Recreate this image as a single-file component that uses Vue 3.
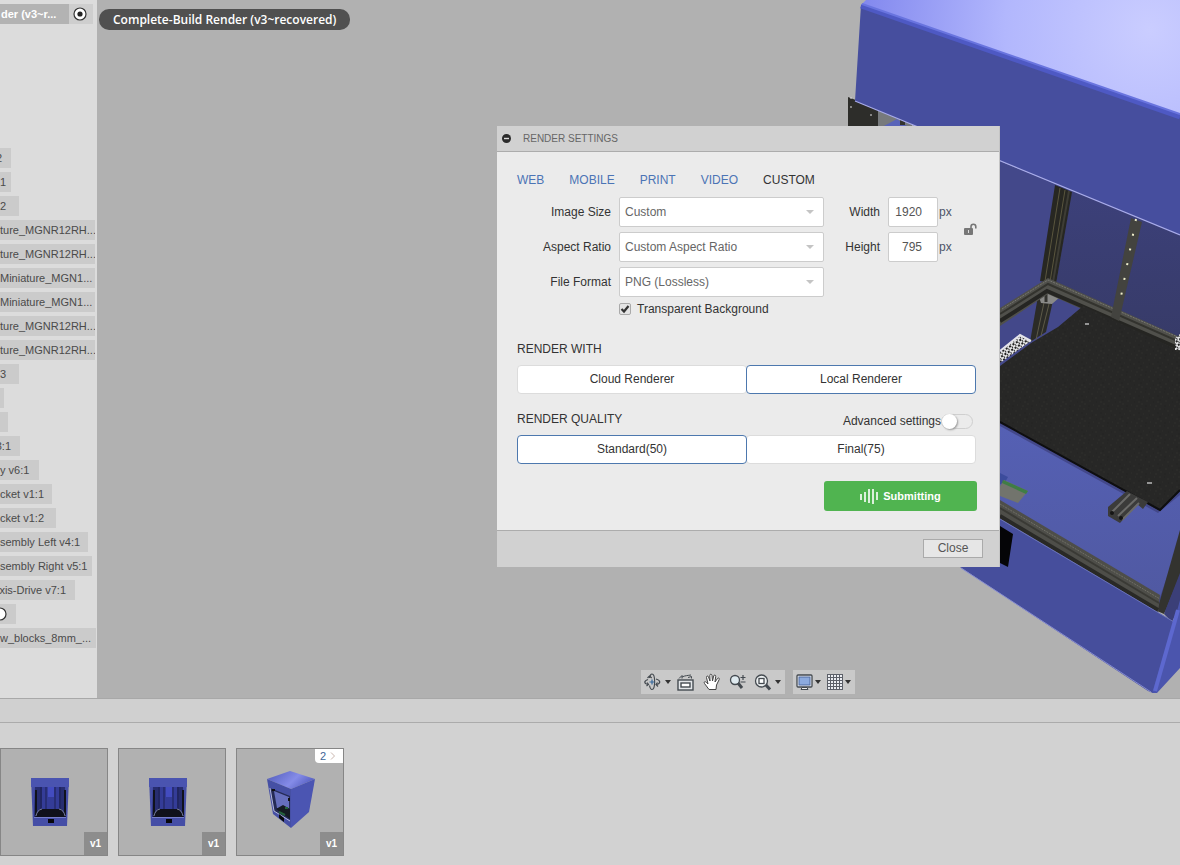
<script setup>
import { ref } from 'vue'

const browserRows = [
  { text: '2', width: 11, clipped: true },
  { text: '1', width: 11 },
  { text: '2', width: 19 },
  { text: 'ture_MGNR12RH...', width: 95 },
  { text: 'ture_MGNR12RH...', width: 95 },
  { text: 'Miniature_MGN1...', width: 95 },
  { text: 'Miniature_MGN1...', width: 95 },
  { text: 'ture_MGNR12RH...', width: 95 },
  { text: 'ture_MGNR12RH...', width: 95 },
  { text: '3', width: 19 },
  { text: '', width: 4 },
  { text: '', width: 8 },
  { text: '3:1', width: 20, clipped: true },
  { text: 'y v6:1', width: 39 },
  { text: 'cket v1:1', width: 52 },
  { text: 'cket v1:2', width: 56 },
  { text: 'sembly Left v4:1', width: 88 },
  { text: 'sembly Right v5:1', width: 92 },
  { text: 'xis-Drive v7:1', width: 75, clipped: true },
  { text: '', radio: true, width: 16, clipped: true },
  { text: 'w_blocks_8mm_...', width: 96 },
]

const tabs = ['WEB', 'MOBILE', 'PRINT', 'VIDEO', 'CUSTOM']
const activeTab = ref('CUSTOM')
const imageSize = ref('Custom')
const aspect = ref('Custom Aspect Ratio')
const format = ref('PNG (Lossless)')
const width = ref('1920')
const height = ref('795')
const transparent = ref(true)
const advanced = ref(false)
const renderer = ref('Local Renderer')
const quality = ref('Standard(50)')
const renders = [{ iso: false }, { iso: false }, { iso: true, count: 2 }]
</script>

<template>
  <div class="app">
    <div class="workspace">
      <aside class="browser">
        <div class="root-row">
          <span class="root-name">der (v3~r...</span>
          <button class="root-radio" aria-label="Activate component">
            <svg width="14" height="14" viewBox="0 0 14 14">
              <circle cx="7" cy="7" r="6" fill="#fff" stroke="#333" stroke-width="1.2" />
              <circle cx="7" cy="7" r="2.6" fill="#222" />
            </svg>
          </button>
        </div>
        <ul class="rows">
          <li v-for="(row, i) in browserRows" :key="i" class="row" :class="{ clipped: row.clipped }" :style="{ width: row.width + 'px' }">
            <svg v-if="row.radio" class="row-radio" width="14" height="14" viewBox="0 0 14 14">
              <circle cx="7" cy="7" r="6" fill="#fff" stroke="#333" stroke-width="1.2" />
            </svg>
            <span v-else>{{ row.text }}</span>
          </li>
        </ul>
      </aside>

      <main class="canvas">
        <svg class="scene" width="340" height="698" viewBox="840 0 340 698" aria-hidden="true">
          <defs>
            <radialGradient id="top" gradientUnits="userSpaceOnUse" cx="1150" cy="30" r="290">
              <stop offset="0" stop-color="#cacdff" />
              <stop offset="0.5" stop-color="#b2b7fd" />
              <stop offset="1" stop-color="#8288ee" />
            </radialGradient>
            <linearGradient id="wall" x1="0" y1="0" x2="0" y2="1">
              <stop offset="0" stop-color="#3c407a" />
              <stop offset="1" stop-color="#373b68" />
            </linearGradient>
            <linearGradient id="floor" x1="0" y1="0" x2="0" y2="1">
              <stop offset="0" stop-color="#5560b4" />
              <stop offset="1" stop-color="#5059a2" />
            </linearGradient>
            <pattern id="mesh" width="4" height="4" patternUnits="userSpaceOnUse" patternTransform="rotate(-32)">
              <rect width="4" height="4" fill="#e4e4e6" />
              <rect width="2" height="2" fill="#222" />
              <rect x="2" y="2" width="1" height="2" fill="#333" />
            </pattern>
            <pattern id="grain" width="19" height="17" patternUnits="userSpaceOnUse">
              <rect width="19" height="17" fill="#272726" />
              <path d="M0 1h2M8 3h2M14 1h1M3 6h1M12 7h2M6 10h2M17 11h2M1 13h2M10 14h1M15 15h2" stroke="#2e2e2c" />
              <path d="M5 1h1M17 5h2M0 9h2M9 7h1M13 11h1M5 15h2" stroke="#222221" />
            </pattern>
          </defs>
          <path d="M866 0 861 5 1180 117V0Z" fill="url(#top)" />
          <path d="M848 97 912 122V127H848Z" fill="#2d2d2a" />
          <path d="M878 110 912 124V127H878Z" fill="#777a7c" />
          <path d="M882 127 897 119 908 127Z" fill="#5964b9" />
          <path d="M900 120h5v5h-5Z" fill="#33332e" />
          <path d="M850 98h2M850 107h2M870 115h2M867 105h2" stroke="#ddd" />
          <path d="M1000 161 1180 235V600L1164 612 1000 518Z" fill="#43488a" />
          <path d="M1072 190 1180 234V340L1056 284Z" fill="url(#wall)" />
          <path d="M861 5 1180 117V235L855 101Z" fill="#464e9e" />
          <path d="M861 6 1180 117" stroke="#4e59c4" stroke-width="5" />
          <path d="M862 4 1180 114" stroke="#6974df" stroke-width="2" />
          <path d="M855 101 1180 235" stroke="#a9acea" stroke-width="1.2" />
          <path d="M1055 185 1072 192 1056 284 1040 281Z" fill="#272722" />
          <path d="M1060 188 1045 281M1065 190 1050 282" stroke="#5a563e" />
          <path d="M1069 191 1053 282" stroke="#3e3d35" stroke-width="2" />
          <path d="M1038 296 1054 296 1046 332 1030 342Z" fill="#2b2b27" />
          <path d="M1045 298 1036 340M1050 300 1041 336" stroke="#5d5a48" />
          <path d="M1038 294 1048 288 1060 297 1052 304 1041 303Z" fill="#898987" />
          <path d="M1046 290v12" stroke="#33332f" stroke-width="3" />
          <path d="M1000 308 1048 278 1180 337V353L1048 294 1000 326Z" fill="#50504b" />
          <path d="M1000 321 1047 291 1180 349" fill="none" stroke="#252522" stroke-width="4" />
          <path d="M1000 314 1048 284 1180 342" fill="none" stroke="#33332e" stroke-width="2" />
          <path d="M1002 309 1048 280 1180 338" fill="none" stroke="#777770" stroke-dasharray="2 1" />
          <path d="M1131 218 1142 222 1123 304 1119 321 1111 317Z" fill="#43433f" />
          <path d="M1136 219 1119 307" stroke="#eeeecb" stroke-width="2" stroke-dasharray="2 13" />
          <path d="M1000 352 1020 335 1031 341 1000 363Z" fill="url(#mesh)" />
          <path d="M1000 351 1020 335 1031 341" fill="none" stroke="#e4e4ea" stroke-width="2" />
          <path d="M1000 426 1158 513 1180 495V540L1160 597 1000 502Z" fill="url(#floor)" />
          <path d="M1083 306 1180 351V491L1160 511 1000 422V366L1031 343 1058 327Z" fill="url(#grain)" />
          <path d="M1000 422 1160 510 1180 490" fill="none" stroke="#0e0e10" stroke-width="2" />
          <path d="M1085 324h4M1147 483h5" stroke="#bbb" stroke-width="1.5" />
          <path d="M1175 338 1180 334V350H1175Z" fill="url(#mesh)" />
          <path d="M1000 473 1008 477 1004 484 1000 484Z" fill="#3c4c9c" />
          <path d="M1004 480 1028 491 1018 503 1000 496V486Z" fill="#72746d" />
          <path d="M1003 480 1028 491 1026 494 1002 483Z" fill="#3f7d45" />
          <path d="M1108 507 1127 491 1148 502 1143 509 1137 504 1120 523 1108 516Z" fill="#3b3b3a" />
          <path d="M1112 512 1130 494M1118 516 1137 498M1122 520 1139 503" stroke="#6b6b69" stroke-width="2" />
          <circle cx="1112" cy="513" r="2" fill="#151515" />
          <circle cx="1121" cy="518" r="2" fill="#151515" />
          <path d="M1180 530V575L1164 614 1157 611Z" fill="#33332f" />
          <path d="M1180 573V606L1172 622 1164 614Z" fill="#3b3f78" />
          <path d="M1000 500 1160 595 1158 613 1000 519Z" fill="#4e4e49" />
          <path d="M1000 504 1160 599" stroke="#6f6f66" stroke-dasharray="2 1" />
          <path d="M1000 508 1159 603" stroke="#3a3a35" stroke-width="2" />
          <path d="M1000 516 1158 610" stroke="#292926" stroke-width="4" />
          <path d="M960 567 1000 519 1174 622 1153 693 1148 691Z" fill="#464e9c" />
          <path d="M1000 519 1174 622" stroke="#6770ba" />
          <path d="M1174 622 1180 600V668L1157 693H1152Z" fill="#4b55ad" />
          <path d="M1178 610 1155 691" stroke="#5d68cf" stroke-width="4" />
          <path d="M961 568 1151 692" stroke="#858bd0" />
          <path d="M1000 526 1013 534 1008 567 1000 563Z" fill="#050507" />
        </svg>

        <div class="doc-title">Complete-Build Render (v3~recovered)</div>

        <section class="dialog" role="dialog" aria-labelledby="dlg-title">
          <header class="dialog-head">
            <button class="collapse" aria-label="Collapse">
              <svg width="9" height="9" viewBox="0 0 9 9">
                <circle cx="4.5" cy="4.5" r="4.5" fill="#2b2b2b" />
                <path d="M2 4.5h5" stroke="#ddd" stroke-width="1.4" />
              </svg>
            </button>
            <h1 id="dlg-title">RENDER SETTINGS</h1>
          </header>

          <div class="dialog-body">
            <nav class="tabs">
              <button v-for="t in tabs" :key="t" class="tab" :class="{ active: t === activeTab }" @click="activeTab = t">{{ t }}</button>
            </nav>

            <div class="form">
              <div class="fields">
                <label for="size">Image Size</label>
                <div class="select"><select id="size" v-model="imageSize"><option>Custom</option></select></div>
                <label for="aspect">Aspect Ratio</label>
                <div class="select"><select id="aspect" v-model="aspect"><option>Custom Aspect Ratio</option></select></div>
                <label for="format">File Format</label>
                <div class="select"><select id="format" v-model="format"><option>PNG (Lossless)</option></select></div>
              </div>
              <div class="dims">
                <label for="w">Width</label>
                <input id="w" v-model="width" type="text" /><span class="unit">px</span>
                <label for="h">Height</label>
                <input id="h" v-model="height" type="text" /><span class="unit">px</span>
              </div>
              <button class="lock" aria-label="Lock aspect ratio">
                <svg width="13" height="13" viewBox="0 0 13 13">
                  <rect x="0" y="5" width="9" height="7" rx="1" fill="#777" />
                  <path d="M7 6V3.6a2.4 2.4 0 0 1 4.8 0V5.5" fill="none" stroke="#777" stroke-width="1.6" />
                  <rect x="4" y="7" width="1" height="3" fill="#ddd" />
                </svg>
              </button>
            </div>

            <div class="check-row">
              <input id="transparent" v-model="transparent" type="checkbox" />
              <svg v-if="transparent" class="tick" width="12" height="12" viewBox="0 0 12 12"><path d="M2.500 6 5 8.500 9.500 3" fill="none" stroke="#333" stroke-width="2.2" /></svg>
              <label for="transparent">Transparent Background</label>
            </div>

            <h2 class="with-title">RENDER WITH</h2>
            <div class="segments">
              <button v-for="o in ['Cloud Renderer', 'Local Renderer']" :key="o" :class="{ on: o === renderer }" @click="renderer = o">{{ o }}</button>
            </div>

            <div class="quality-head">
              <h2>RENDER QUALITY</h2>
              <label class="advanced">Advanced settings<input v-model="advanced" type="checkbox" role="switch" /></label>
            </div>
            <div class="segments">
              <button v-for="o in ['Standard(50)', 'Final(75)']" :key="o" :class="{ on: o === quality }" @click="quality = o">{{ o }}</button>
            </div>

            <button class="submit">
              <svg width="18" height="16" viewBox="0 0 18 16">
                <path d="M1 6v6M5 4v10M9 1v14M13 1v15M17 4v8" stroke="#fff" stroke-width="1.6" />
              </svg>
              Submitting
            </button>
          </div>

          <footer class="dialog-foot"><button class="close">Close</button></footer>
        </section>

        <div class="navbar">
          <div class="nav-group">
            <button class="menu" aria-label="Orbit">
              <svg width="18" height="18" viewBox="0 0 18 18" fill="none" stroke="#444a50" stroke-width="1.2">
                <path d="M5.500 5C6 2.500 7 1 8 1c3.500 0 3.500 15.500 0 15.500-1 0-2-1.500-2.500-4" />
                <path d="M4 6.500C-.5 8 0 10.500 4 11.500M12 6c5 1.500 5 4.500 0 5.500" />
                <path d="M3.500 5 5.500 3l2.200 2M2.500 13 4.500 11.500 3 9.500M13.500 9.500 12 11.500l2 2" />
                <path d="M8 6.500v5M5.500 9h5" stroke="#35679c" />
              </svg><i class="caret"></i>
            </button>
            <button class="tool" aria-label="Look at">
              <svg width="18" height="18" viewBox="0 0 18 18" fill="none" stroke="#444a50" stroke-width="1.4">
                <rect x="1" y="7" width="15" height="10" fill="#e3e6e9" />
                <rect x="4" y="10" width="9" height="4" fill="#fff" />
                <path d="M2 5.500 5 2.500v3M5 4c3-1.500 6-1.500 9-2M11 4.500l3.500-1v2" stroke-width="1" />
              </svg>
            </button>
            <button class="tool" aria-label="Pan">
              <svg width="18" height="18" viewBox="0 0 18 18">
                <path d="M6 16.500 1.500 10.500C.5 9 2 8 3.300 9.300L5 11 3.500 4.500C3.200 2.800 5 2.500 5.500 4L7 8 6.800 2.500c0-1.700 2-1.700 2.200 0L9.500 8l1.200-5c.4-1.500 2.200-1.200 2 .4L12 9l2.500-3.500c.8-1.200 2.200-.3 1.700 1L13.500 12 13 16.500Z" fill="#fff" stroke="#444" />
              </svg>
            </button>
            <button class="tool" aria-label="Zoom">
              <svg width="18" height="18" viewBox="0 0 18 18" fill="none" stroke="#444a50">
                <circle cx="6" cy="7" r="4.500" fill="#dfeaef" stroke-width="1.3" />
                <path d="m9 10 4 5" stroke-width="3" />
                <path d="M14 2v5M11.500 4.500h5M11.500 9h5" stroke-width="1.2" />
              </svg>
            </button>
            <button class="menu" aria-label="Fit">
              <svg width="18" height="18" viewBox="0 0 18 18" fill="none" stroke="#444a50">
                <circle cx="7.500" cy="8" r="6" fill="#edf0f1" stroke-width="1.3" />
                <rect x="5" y="5.500" width="5" height="5" fill="#fff" stroke-width="1.3" />
                <path d="m12 12 4 4.500" stroke-width="3" />
              </svg><i class="caret"></i>
            </button>
          </div>
          <div class="nav-group">
            <button class="menu tight" aria-label="Display settings">
              <svg width="18" height="18" viewBox="0 0 18 18" stroke="#444a50">
                <rect x="1" y="2" width="15" height="12" rx="1" fill="#eef1f6" stroke-width="1.3" />
                <rect x="3" y="4" width="11" height="8" fill="#8caade" stroke="#4f6ba0" />
                <path d="M6 14.500h5l1 2H5Z" fill="#eee" />
              </svg><i class="caret"></i>
            </button>
            <button class="menu tight" aria-label="Grid and snaps">
              <svg width="18" height="18" viewBox="0 0 18 18">
                <rect x="1" y="2" width="16" height="15" fill="#eceef3" />
                <path d="M1.500 1v16M4.500 1v16M7.500 1v16M10.500 1v16M13.500 1v16M16.500 1v16M1 1.500h16M1 4.500h16M1 7.500h16M1 10.500h16M1 13.500h16M1 16.500h16" stroke="#5c6069" />
              </svg><i class="caret"></i>
            </button>
          </div>
        </div>
      </main>
    </div>

    <section class="gallery">
      <div class="gallery-bar"></div>
      <div class="thumbs">
        <button v-for="(r, i) in renders" :key="i" class="thumb">
          <svg v-if="!r.iso" width="106" height="106" viewBox="1 1 106 106">
            <path d="M31 30h38l-2 48H33Z" fill="#454ea6" />
            <path d="M31 30h38v9H31Z" fill="#4a54b0" />
            <path d="M35 39h30l1 30H34Z" fill="#272d70" />
            <path d="M42 39h17v23H42Z" fill="#343c98" />
            <path d="M48 39h6v10h-6Z" fill="#434cc0" />
            <path d="M46 39v24M55 39v24M60 39v24M41 39v22" stroke="#1c2154" />
            <path d="M36 42v25M65 42v25" stroke="#10121c" stroke-width="2" />
            <path d="M40 61h21l5 8H35Z" fill="#10111b" />
            <path d="M36 68q1-6 6-7M65 68q-1-6-6-7" fill="none" stroke="#777d99" />
            <path d="M34 69.500h32" stroke="#767eca" />
            <path d="M48 71h6v4h-6Z" fill="#08080c" />
          </svg>
          <svg v-else width="106" height="106" viewBox="1 1 106 106">
            <defs>
              <linearGradient id="lid" x1="0" y1="0" x2="1" y2="0.4">
                <stop offset="0" stop-color="#4e58b8" />
                <stop offset="0.65" stop-color="#858ce8" />
                <stop offset="1" stop-color="#5962c4" />
              </linearGradient>
            </defs>
            <path d="M31 31 54 23 79 31 55 41Z" fill="url(#lid)" />
            <path d="M31 31 55 41V80L37 66Z" fill="#4650a4" />
            <path d="M55 41 79 31 73 64 55 80Z" fill="#4b55b2" />
            <path d="M34 40 54 48V72L38 63Z" fill="#252b55" />
            <path d="M38 43 53 49V62L41 60Z" fill="#666fbd" />
            <path d="M40 61 47 57 54 61V71Z" fill="#151b22" />
            <path d="M34 40 38 63 54 73" fill="none" stroke="#b5b9dc" />
            <path d="M43 64 49 67M49 60h3" stroke="#24613a" stroke-width="2" />
            <path d="M43 66 48 70v4l-5-4Z" fill="#08080c" />
            <path d="M36 42h3M53 50v3" stroke="#111" stroke-width="2" />
          </svg>
          <span v-if="r.count" class="count">{{ r.count }}<svg width="6" height="8" viewBox="0 0 6 8"><path d="M1 0.500 4.500 4 1 7.500" fill="none" stroke="#c9b5ad" /></svg></span>
          <span class="version">v1</span>
        </button>
      </div>
    </section>
  </div>
</template>

<style>
body {
  margin: 0;
  background: #d2d2d2;
}
</style>

<style scoped>
.app {
  display: flex;
  flex-direction: column;
  min-height: 100vh;
  font-family: "Liberation Sans", Arial, sans-serif;
  font-size: 12px;
  color: #333;
}
.app *,
.app *::before,
.app *::after {
  box-sizing: border-box;
}
button,
input,
select {
  font: inherit;
  color: inherit;
}
button {
  padding: 0;
  border: 0;
  background: none;
  cursor: pointer;
}
svg {
  display: block;
}
h1,
h2 {
  margin: 0;
  font-weight: normal;
}
.workspace {
  display: flex;
  flex: 1;
  background: #b1b1b1;
}
.browser {
  width: 97px;
  flex: none;
  padding-top: 4px;
  background: #dcdcdc;
  overflow: hidden;
}
.root-row {
  display: flex;
  width: 93px;
  height: 20px;
  background: #cecece;
}
.root-name {
  width: 69px;
  padding-left: 1px;
  overflow: hidden;
  background: #b3b3b3;
  color: #fff;
  font-size: 11px;
  font-weight: bold;
  line-height: 20px;
  white-space: nowrap;
}
.root-radio {
  padding-left: 4px;
}
.rows {
  display: flex;
  flex-direction: column;
  gap: 4px;
  margin: 124px 0 0;
  padding: 0;
  list-style: none;
}
.row {
  display: flex;
  align-items: center;
  height: 20px;
  overflow: hidden;
  background: #cbcbcb;
  color: #4a4a4a;
  font-size: 11px;
  line-height: 20px;
  white-space: nowrap;
}
.row.clipped {
  justify-content: flex-end;
  padding-right: 9px;
}
.row-radio {
  flex: none;
}
.canvas {
  position: relative;
  flex: 1;
  min-width: 0;
  overflow: hidden;
}
.scene {
  position: absolute;
  top: 0;
  right: 0;
}
.doc-title {
  position: absolute;
  top: 9px;
  left: 2px;
  padding: 0 14px;
  border-radius: 10px;
  background: #505050;
  color: #fff;
  font-family: "Open Sans", "Noto Sans", sans-serif;
  font-size: 12px;
  font-weight: 600;
  line-height: 21px;
  white-space: nowrap;
}
.dialog {
  position: absolute;
  top: 126px;
  right: 180px;
  width: 503px;
  background: #ebebeb;
  border-right: 1px solid #c4c4c4;
}
.dialog-head {
  display: flex;
  align-items: center;
  gap: 12px;
  height: 26px;
  padding-left: 5px;
  border-bottom: 1px solid #acacac;
  background: #d1d1d1;
}
.dialog-head h1 {
  color: #666;
  font-size: 10px;
}
.dialog-body {
  padding: 20px 22px 19px 20px;
}
.tabs {
  display: flex;
  gap: 25px;
  margin-bottom: 9px;
  line-height: 16px;
}
.tab {
  color: #4b74b5;
}
.tab.active {
  color: #333;
}
.form {
  display: flex;
}
.fields {
  display: grid;
  grid-template-columns: 94px 1fr;
  column-gap: 8px;
  row-gap: 5px;
  align-items: center;
  flex: 1;
  text-align: right;
}
.select {
  position: relative;
}
.select::after {
  content: "";
  position: absolute;
  top: 13px;
  right: 10px;
  border: 4px solid transparent;
  border-top-color: #c4c4c4;
  border-bottom: 0;
}
.select select {
  display: block;
  width: 100%;
  height: 30px;
  padding: 0 20px 0 5px;
  appearance: none;
  border: 1px solid #ccc;
  border-radius: 2px;
  background: #fff;
  color: #666;
}
.dims {
  display: grid;
  grid-template-columns: 64px 50px 14px;
  grid-auto-rows: 30px;
  row-gap: 5px;
  align-items: center;
  align-self: flex-start;
}
.dims label {
  padding-right: 8px;
  text-align: right;
}
.dims input {
  width: 50px;
  height: 30px;
  padding: 0 15px 0 4px;
  border: 1px solid #ccc;
  border-radius: 2px;
  background: #fff;
  color: #555;
  text-align: right;
}
.unit {
  padding-left: 1px;
  color: #4d5568;
}
.lock {
  align-self: flex-start;
  margin: 26px 0 0 12px;
}
.check-row {
  display: flex;
  position: relative;
  align-items: center;
  gap: 6px;
  height: 16px;
  margin: 4px 0 0 102px;
}
.check-row input {
  width: 12px;
  height: 12px;
  margin: 0;
  appearance: none;
  border: 1px solid #aaa;
  border-radius: 2px;
  background: #e4e4e4;
}
.tick {
  position: absolute;
  top: 2px;
  left: 0;
  pointer-events: none;
}
h2 {
  font-size: 12px;
  line-height: 16px;
}
.with-title {
  margin: 24px 0 8px;
}
.segments {
  display: flex;
  margin-right: 1px;
}
.segments button {
  flex: 1;
  height: 29px;
  padding-bottom: 2px;
  border: 1px solid #dcdcdc;
  border-radius: 4px;
  background: #fff;
}
.segments button + button {
  margin-left: -1px;
}
.segments .on {
  position: relative;
  border-color: #4d78ae;
}
.quality-head {
  display: flex;
  justify-content: space-between;
  height: 16px;
  margin: 17px 0 8px;
}
.advanced {
  display: flex;
  align-items: center;
  height: 20px;
  padding-right: 4px;
}
.advanced input {
  display: flex;
  width: 32px;
  height: 15px;
  margin: 0;
  appearance: none;
  border: 1px solid #cfcfcf;
  border-radius: 8px;
}
.advanced input::before {
  content: "";
  width: 15px;
  height: 15px;
  margin-top: -1px;
  border-radius: 50%;
  background: #fff;
  box-shadow: 1px 1px 2px #999;
}
.advanced input:checked {
  justify-content: flex-end;
  background: #4db350;
}
.submit {
  display: flex;
  align-items: center;
  justify-content: center;
  gap: 5px;
  width: 153px;
  height: 30px;
  margin: 17px 0 0 auto;
  border-radius: 3px;
  background: #50b450;
  color: #fff;
  font-size: 11px;
  font-weight: bold;
}
.dialog-foot {
  display: flex;
  align-items: center;
  justify-content: flex-end;
  height: 37px;
  padding: 0 16px 2px 0;
  border-top: 1px solid #acacac;
  background: #d1d1d1;
}
.close {
  width: 60px;
  height: 19px;
  border: 1px solid #aaa;
  background: #e6e6e6;
  color: #555;
  font-size: 12px;
}
.navbar {
  position: absolute;
  right: 325px;
  bottom: 4px;
  display: flex;
  gap: 8px;
}
.nav-group {
  display: flex;
  height: 24px;
  padding-right: 2px;
  background: #c9c9c9;
}
.tool {
  display: flex;
  align-items: center;
  justify-content: center;
  width: 26px;
}
.menu {
  display: flex;
  align-items: center;
  gap: 2px;
  padding: 0 1px 0 3px;
}
.menu.tight {
  gap: 0;
}
.caret {
  margin: 0 1px;
  border: 3px solid transparent;
  border-top: 4px solid #333;
  border-bottom: 0;
}
.gallery {
  border-top: 1px solid #a8a8a8;
  background: #d2d2d2;
}
.gallery-bar {
  height: 24px;
  border-bottom: 1px solid #ababab;
  background: #d0d0d0;
}
.thumbs {
  display: flex;
  gap: 10px;
  padding: 25px 0 9px;
}
.thumb {
  position: relative;
  width: 108px;
  height: 108px;
  border: 1px solid #868686;
  background: #b1b1b1;
}
.version {
  position: absolute;
  right: 0;
  bottom: 0;
  width: 23px;
  background: #8d8d8d;
  color: #fff;
  font-size: 10px;
  font-weight: bold;
  line-height: 23px;
}
.count {
  position: absolute;
  top: 0;
  right: 0;
  display: flex;
  align-items: center;
  gap: 4px;
  height: 14px;
  padding: 0 7px 0 5px;
  border-bottom-left-radius: 4px;
  background: #fff;
  color: #3e6697;
  font-size: 11px;
}
</style>
